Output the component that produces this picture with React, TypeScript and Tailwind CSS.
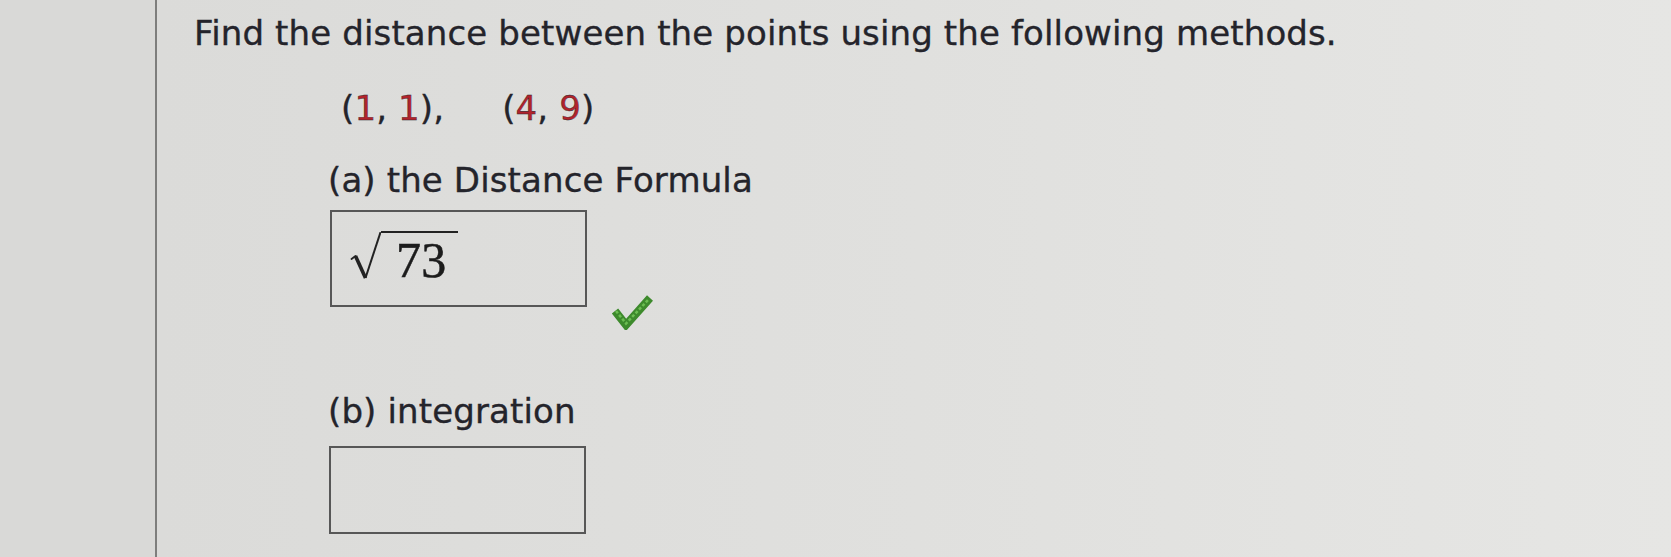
// App.tsx — "distance between points" homework question
const sans = { fontFamily: '"DejaVu Sans", Verdana, sans-serif' }

function Radical73() {
    return (
        <div className="flex items-start">
            <svg width="31" height="49" viewBox="0 0 31 49" className="block">
                <path d="M1.5 28 L5.5 25" stroke="#222" strokeWidth="1.8" fill="none" strokeLinecap="round" />
                <path d="M5.5 25 L15.5 47" stroke="#222" strokeWidth="3.6" fill="none" strokeLinejoin="round" />
                <path d="M15.5 47 L30.5 1.2" stroke="#222" strokeWidth="2" fill="none" />
            </svg>
            <span
                className="block w-[77px] border-t-2 border-[#222] pt-[2px] pl-[15px] text-[50px] leading-[50px] text-[#1c1c1c] [-webkit-text-stroke:0.5px_#1c1c1c]"
                style={{ fontFamily: '"Liberation Serif", "DejaVu Serif", serif' }}
            >
                73
            </span>
        </div>
    )
}

function GreenCheck() {
    return (
        <svg width="42" height="36" viewBox="0 0 42 36" className="block">
            <path d="M4 17 L15 31 L39 4" stroke="#3d8a2c" strokeWidth="8" fill="none" strokeLinejoin="miter" />
            <path d="M5 17 L15 29.5 L38 5" stroke="#6cbd52" strokeWidth="2.5" fill="none" strokeDasharray="3 2" />
        </svg>
    )
}

export default function App() {
    return (
        <div className="flex w-full h-[557px] overflow-hidden bg-[#dcdcda]" style={sans}>
            {/* left gutter */}
            <div className="w-[157px] shrink-0 border-r-2 border-[#7e7e7c] bg-[#d9d9d7]" />

            {/* question */}
            <div className="flex-1 pl-[37px] pt-[13px] text-[34px] leading-[40px] tracking-[0.13px] text-[#24242b] [-webkit-text-stroke:0.35px_#24242b] bg-linear-to-r from-[#dbdbd9] via-[#e0e0de] to-[#e6e6e4]">
                <p className="whitespace-nowrap">Find the distance between the points using the following methods.</p>

                <div className="ml-[134px]">
                    <div className="mt-[35px] ml-[13px] flex gap-[58px]">
                        <span>(<span className="text-[#b2232b]">1</span>, <span className="text-[#b2232b]">1</span>),</span>
                        <span>(<span className="text-[#b2232b]">4</span>, <span className="text-[#b2232b]">9</span>)</span>
                    </div>

                    <p className="mt-[32px]">(a) the Distance Formula</p>

                    <div className="mt-[10px] ml-[2px] flex items-start gap-[24px] h-[118px]">
                        <div className="w-[257px] h-[97px] border-2 border-[#575757] pl-[18px] pt-[19px]">
                            <Radical73 />
                        </div>
                        <div className="mt-[84px]">
                            <GreenCheck />
                        </div>
                    </div>

                    <p className="mt-[63px]">(b) integration</p>

                    <div className="mt-[15px] ml-[1px] w-[257px] h-[88px] border-2 border-[#575757]" />
                </div>
            </div>
        </div>
    )
}
